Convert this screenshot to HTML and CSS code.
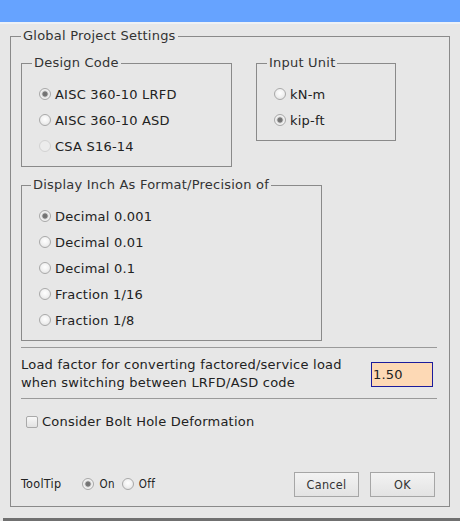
FILE: index.html
```html
<!DOCTYPE html>
<html>
<head>
<meta charset="utf-8">
<link rel="stylesheet" href="styles.css">
</head>
<body>
<div class="titlebar"></div>
<div class="titlesep"></div>
<div class="dialog">
  <fieldset class="group outer">
    <legend>Global Project Settings</legend>
    <div class="toprow">
      <fieldset class="group code">
        <legend>Design Code</legend>
        <label class="opt"><input type="radio" name="code" checked><span>AISC 360-10 LRFD</span></label>
        <label class="opt"><input type="radio" name="code"><span>AISC 360-10 ASD</span></label>
        <label class="opt disabled"><input type="radio" name="code" disabled><span>CSA S16-14</span></label>
      </fieldset>
      <fieldset class="group unit">
        <legend>Input Unit</legend>
        <label class="opt"><input type="radio" name="unit"><span>kN-m</span></label>
        <label class="opt"><input type="radio" name="unit" checked><span>kip-ft</span></label>
      </fieldset>
    </div>
    <fieldset class="group inch">
      <legend>Display Inch As Format/Precision of</legend>
      <label class="opt"><input type="radio" name="inch" checked><span>Decimal 0.001</span></label>
      <label class="opt"><input type="radio" name="inch"><span>Decimal 0.01</span></label>
      <label class="opt"><input type="radio" name="inch"><span>Decimal 0.1</span></label>
      <label class="opt"><input type="radio" name="inch"><span>Fraction 1/16</span></label>
      <label class="opt"><input type="radio" name="inch"><span>Fraction 1/8</span></label>
    </fieldset>
    <div class="rule first"></div>
    <div class="factor">
      <div class="factor-text">Load factor for converting factored/service load<br>when switching between LRFD/ASD code</div>
      <input class="factor-input" type="text" value="1.50">
    </div>
    <div class="rule"></div>
    <label class="check"><input type="checkbox"><span>Consider Bolt Hole Deformation</span></label>
    <div class="bottomrow">
      <div class="tooltip">
        <span class="tt-label">ToolTip</span>
        <label class="small-opt"><input type="radio" name="tt" checked><span>On</span></label>
        <label class="small-opt"><input type="radio" name="tt"><span>Off</span></label>
      </div>
      <div class="buttons">
        <button class="btn">Cancel</button>
        <button class="btn">OK</button>
      </div>
    </div>
  </fieldset>
</div>
<div class="shadow"></div>
</body>
</html>
```

FILE: styles.css
```css
html, body {
  margin: 0;
  padding: 0;
  height: 521px;
  overflow: hidden;
  background: #e7e7e7;
}
body {
  font-family: "DejaVu Sans", Verdana, sans-serif;
  font-size: 13px;
  letter-spacing: 0.22px;
  color: #222;
}
.titlebar {
  height: 22px;
  background: #66a3ff;
}
.titlesep {
  height: 2px;
  background: #edf1f6;
}
.dialog {
  padding: 4px 10px 0 10px;
  height: 490px;
  box-sizing: border-box;
}
.group {
  margin: 0;
  border: 1px solid #8a8a8a;
  min-width: 0;
}
.group legend {
  padding: 0 2px;
  line-height: 16px;
  font-size: 13px;
  color: #333;
}
.outer {
  padding: 11px 10px 9px 10px;
  height: 479px;
  box-sizing: border-box;
  display: flex;
  flex-direction: column;
}
.toprow {
  display: flex;
  align-items: flex-start;
  gap: 24px;
}
.code, .unit, .inch {
  padding: 10px 10px 7px 17px;
}
.code legend, .unit legend, .inch legend {
  margin-left: -7px;
}
.inch legend { margin-left: -8px; }
.code { width: 211px; box-sizing: border-box; }
.unit { width: 140px; box-sizing: border-box; }
.inch { width: 301px; box-sizing: border-box; margin-top: 10px; }
.opt {
  display: flex;
  align-items: center;
  height: 26px;
  font-size: 13px;
  color: #222;
}
input[type=radio] {
  -webkit-appearance: none;
  appearance: none;
  width: 12px;
  height: 12px;
  margin: 0 4px 0 0;
  border: 1px solid #a9a9a9;
  border-radius: 50%;
  background: radial-gradient(circle at 50% 40%, #ffffff 0%, #f1f1f1 50%, #dcdcdc 100%);
  box-sizing: border-box;
  flex: none;
}
input[type=radio]:checked {
  background: radial-gradient(circle, #6e6e6e 0, #7a7a7a 2.2px, #d0d0d0 3px, #f4f4f4 4px, #e0e0e0 100%);
}
input[type=radio]:disabled {
  border-color: #d2d2d2;
  background: #ececec;
}
.rule {
  height: 1px;
  background: #9a9a9a;
  width: 416px;
}
.rule.first { margin-top: 6px; }
.factor {
  display: flex;
  align-items: center;
  justify-content: space-between;
  width: 412px;
  padding: 8px 0 6px 0;
}
.factor-text {
  line-height: 18px;
  color: #222;
  white-space: nowrap;
}
.factor-input {
  width: 62px;
  height: 25px;
  box-sizing: border-box;
  border: 1px solid #1c1c9c;
  background: #fdd9b5;
  font-family: "DejaVu Sans", Verdana, sans-serif;
  font-size: 13px;
  letter-spacing: 0.22px;
  color: #222;
  padding: 0 1px;
  margin: 0;
}
.check {
  display: flex;
  align-items: center;
  margin-top: 15px;
  margin-left: 5px;
  color: #222;
}
.check input {
  -webkit-appearance: none;
  appearance: none;
  width: 12px;
  height: 12px;
  margin: 0 4px 0 0;
  border: 1px solid #a9a9a9;
  border-radius: 2px;
  background: linear-gradient(#f8f8f8, #e2e2e2);
  box-sizing: border-box;
}
.bottomrow {
  margin-top: auto;
  display: flex;
  align-items: center;
  justify-content: space-between;
  width: 414px;
}
.tooltip {
  display: flex;
  align-items: center;
  font-family: "DejaVu Sans Condensed", "DejaVu Sans", sans-serif;
  font-size: 12.5px;
  letter-spacing: 0.3px;
  color: #222;
  margin-top: -2px;
}
.tt-label { margin-right: 21px; }
.small-opt {
  display: flex;
  align-items: center;
  font-size: 11.5px;
  margin-right: 7px;
}
.small-opt input { margin-right: 5px; }
.buttons {
  display: flex;
  gap: 11px;
}
.btn {
  width: 65px;
  height: 25px;
  border: 1px solid #a6a6a6;
  background: linear-gradient(#f3f3f3, #e3e3e3);
  font-family: "DejaVu Sans Condensed", "DejaVu Sans", sans-serif;
  font-size: 12.5px;
  letter-spacing: 0.3px;
  color: #333;
  padding: 0;
  margin: 0;
}
.shadow {
  margin-top: 4px;
  margin-left: 3px;
  height: 3px;
  background: #707070;
}
```
